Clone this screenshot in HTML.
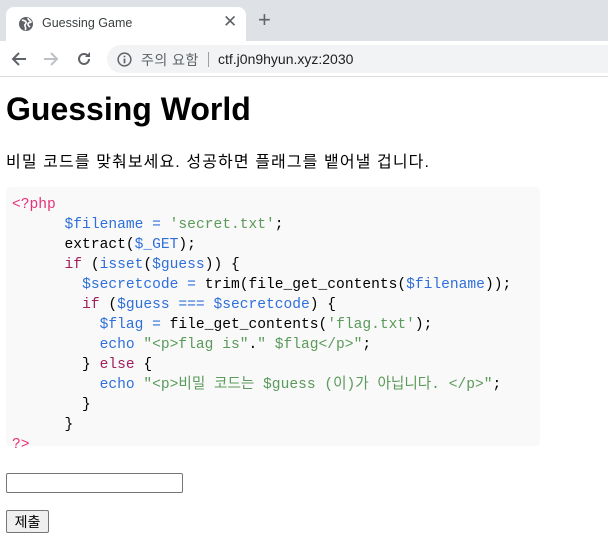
<!DOCTYPE html>
<html><head><meta charset="utf-8"><style>
*{margin:0;padding:0;box-sizing:border-box}
body{width:608px;height:555px;overflow:hidden;background:#fff;font-family:"Liberation Sans","Noto Sans CJK KR",sans-serif;position:relative}
.tabs{position:absolute;left:0;top:0;width:608px;height:41px;background:#dee1e6}
.tab{position:absolute;left:6px;top:7px;width:240px;height:34px;background:#fff;border-radius:8px 8px 0 0}
.tab .t{position:absolute;left:36px;top:9px;font-size:12.5px;color:#3c4043}
.tab .x{position:absolute;left:217px;top:5px;font-size:17px;color:#5f6368}
.plus{position:absolute;left:258px;top:9px;font-size:22px;color:#5f6368;line-height:22px}
.bar{position:absolute;left:0;top:41px;width:608px;height:36px;background:#fff;border-bottom:1px solid #dadce0}
.url{position:absolute;left:107px;top:4px;width:520px;height:28px;background:#f1f3f4;border-radius:14px}
.url .s{position:absolute;left:34px;top:5px;font-size:14px;color:#5f6368;letter-spacing:0.5px}
.url .sep{position:absolute;left:101px;top:7px;width:1px;height:15px;background:#9aa0a6}
.url .u{position:absolute;left:111px;top:6px;font-size:14px;color:#202124}
h1{position:absolute;left:6px;top:91px;font-size:32px;font-weight:bold;color:#000}
.p{position:absolute;left:6px;top:148px;font-size:16px;color:#000;letter-spacing:1.1px}
pre{position:absolute;left:6px;top:187px;width:534px;height:259px;background:#f9f9f9;border-radius:4px;font-family:"Liberation Mono","Noto Sans CJK KR",monospace;font-size:14.6px;line-height:20px;padding:8px 0 0 6px;color:#000;overflow:visible}
.k{color:#e8307a}.v{color:#2f6fdb}.s2{color:#5a9a5a}.kw{color:#a0205c}
input{position:absolute;left:6px;top:473px;width:177px;height:20px;border:1px solid #767676;border-radius:2px}
button{position:absolute;left:6px;top:510px;width:43px;height:23px;border:1px solid #767676;border-radius:2px;background:#efefef;font-size:14px;font-family:"Liberation Sans","Noto Sans CJK KR",sans-serif}
</style></head><body>
<div class="tabs"><div class="tab">
<svg style="position:absolute;left:12px;top:9px" width="16" height="16" viewBox="0 0 16 16"><circle cx="8" cy="8" r="7" fill="#5f6368"/><path d="M4 4c2 1 3 0 4 2s-2 2-1 4 1 3 0 4M10 2c0 2 2 2 3 4-1 1-3 0-3 2s1 2 2 3" stroke="#fff" stroke-width="1.6" fill="none"/></svg>
<span class="t">Guessing Game</span><span class="x">✕</span></div>
<span class="plus">+</span></div>
<div class="bar">
<svg style="position:absolute;left:11px;top:10px" width="16" height="16" viewBox="0 0 16 16"><path d="M15 8H2M8 2L2 8l6 6" stroke="#5f6368" stroke-width="2" fill="none"/></svg>
<svg style="position:absolute;left:43px;top:10px" width="16" height="16" viewBox="0 0 16 16"><path d="M1 8h13M8 2l6 6-6 6" stroke="#bdc1c6" stroke-width="2" fill="none"/></svg>
<svg style="position:absolute;left:76px;top:10px" width="16" height="16" viewBox="0 0 16 16"><path d="M13 8a5 5 0 1 1-1.5-3.6" stroke="#5f6368" stroke-width="2" fill="none"/><path d="M14 1v5H9z" fill="#5f6368"/></svg>
<div class="url">
<svg style="position:absolute;left:10px;top:7px" width="15" height="15" viewBox="0 0 16 16"><circle cx="8" cy="8" r="6.8" stroke="#5f6368" stroke-width="1.6" fill="none"/><path d="M8 7v5M8 4v1.6" stroke="#5f6368" stroke-width="1.8"/></svg>
<span class="s">주의 요함</span><span class="sep"></span><span class="u">ctf.j0n9hyun.xyz:2030</span></div></div>
<h1>Guessing World</h1>
<div class="p">비밀 코드를 맞춰보세요. 성공하면 플래그를 뱉어낼 겁니다.</div>
<pre><span class="k">&lt;?php</span>
      <span class="v">$filename</span> <span class="v">=</span> <span class="s2">'secret.txt'</span>;
      extract(<span class="v">$_GET</span>);
      <span class="kw">if</span> (<span class="v">isset</span>(<span class="v">$guess</span>)) {
        <span class="v">$secretcode</span> <span class="v">=</span> trim(file_get_contents(<span class="v">$filename</span>));
        <span class="kw">if</span> (<span class="v">$guess</span> <span class="v">===</span> <span class="v">$secretcode</span>) {
          <span class="v">$flag</span> <span class="v">=</span> file_get_contents(<span class="s2">'flag.txt'</span>);
          <span class="v">echo</span> <span class="s2">"&lt;p&gt;flag is"</span>.<span class="s2">" $flag&lt;/p&gt;"</span>;
        } <span class="kw">else</span> {
          <span class="v">echo</span> <span class="s2">"&lt;p&gt;비밀 코드는 $guess (이)가 아닙니다. &lt;/p&gt;"</span>;
        }
      }
<span class="k">?&gt;</span></pre>
<input type="text">
<button>제출</button>
</body></html>
